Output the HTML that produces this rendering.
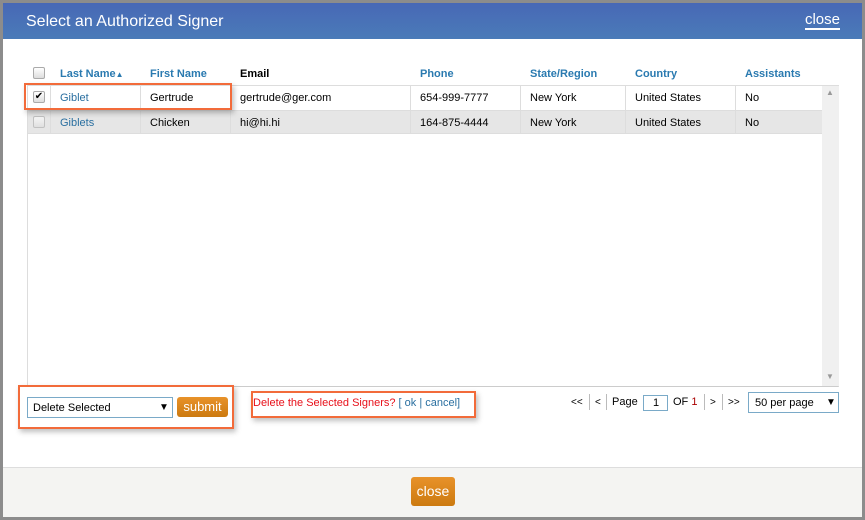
<!DOCTYPE html>
<html><head><style>
*{margin:0;padding:0;box-sizing:border-box}
body{width:865px;height:520px;background:#8c8c8c;font-family:"Liberation Sans",Arial,sans-serif;position:relative;overflow:hidden}
.dlg{position:absolute;left:3px;top:3px;width:859px;height:514px;background:#fff}
.hdr{position:absolute;left:0;top:0;width:859px;height:36px;background:linear-gradient(#4868b6,#4a7bb8);color:#fff}
.hdr .t{position:absolute;left:23px;top:10px;font-size:16px}
.hdr .c{position:absolute;right:22px;top:9px;font-size:15px;border-bottom:2px solid #fff;line-height:16px}
.a{position:absolute;font-size:11px;white-space:nowrap}
.h{font-weight:bold;color:#2a7ab0}
.cb{position:absolute;width:12px;height:12px;border:1px solid #aaa;border-radius:2px;background:linear-gradient(#fff,#ddd)}
.box{position:absolute;border:2px solid #f26b3a;box-shadow:2px 3px 5px rgba(0,0,0,.25)}
.vl{position:absolute;width:1px;background:#ddd}
.btn{position:absolute;background:linear-gradient(#e8922a,#cc7a10);color:#fff;border-radius:3px;text-align:center}
</style></head><body>
<div class="dlg">
<div class="hdr"><span class="t">Select an Authorized Signer</span><span class="c">close</span></div>
</div>
<div class="cb" style="left:33px;top:67px"></div>
<div class="a h" style="left:60px;top:68px">Last Name<span style="font-size:8px">▲</span></div>
<div class="a h" style="left:150px;top:68px">First Name</div>
<div class="a" style="left:240px;top:68px;font-weight:bold">Email</div>
<div class="a h" style="left:420px;top:68px">Phone</div>
<div class="a h" style="left:530px;top:68px">State/Region</div>
<div class="a h" style="left:635px;top:68px">Country</div>
<div class="a h" style="left:745px;top:68px">Assistants</div>
<div style="position:absolute;left:27px;top:85px;width:812px;height:302px;border:1px solid #ddd;border-bottom-color:#ccc"></div>
<div style="position:absolute;left:28px;top:110px;width:794px;height:24px;background:#e6e6e6;border-top:1px solid #ddd;border-bottom:1px solid #ddd"></div>
<div style="position:absolute;left:822px;top:86px;width:17px;height:300px;background:#f0f0f0"></div>
<div class="a" style="left:826px;top:88px;color:#999;font-size:8px">▲</div>
<div class="a" style="left:826px;top:372px;color:#999;font-size:8px">▼</div>
<div class="vl" style="left:50px;top:86px;height:48px"></div>
<div class="vl" style="left:140px;top:86px;height:48px"></div>
<div class="vl" style="left:230px;top:86px;height:48px"></div>
<div class="vl" style="left:410px;top:86px;height:48px"></div>
<div class="vl" style="left:520px;top:86px;height:48px"></div>
<div class="vl" style="left:625px;top:86px;height:48px"></div>
<div class="vl" style="left:735px;top:86px;height:48px"></div>
<div class="cb" style="left:33px;top:91px;font-size:10px;line-height:10px;text-align:center">✔</div>
<div class="a" style="left:60px;top:92px;color:#2a6fa0">Giblet</div>
<div class="a" style="left:150px;top:92px">Gertrude</div>
<div class="a" style="left:240px;top:92px">gertrude@ger.com</div>
<div class="a" style="left:420px;top:92px">654-999-7777</div>
<div class="a" style="left:530px;top:92px">New York</div>
<div class="a" style="left:635px;top:92px">United States</div>
<div class="a" style="left:745px;top:92px">No</div>
<div class="cb" style="left:33px;top:116px;opacity:.6"></div>
<div class="a" style="left:60px;top:117px;color:#2a6fa0">Giblets</div>
<div class="a" style="left:150px;top:117px">Chicken</div>
<div class="a" style="left:240px;top:117px">hi@hi.hi</div>
<div class="a" style="left:420px;top:117px">164-875-4444</div>
<div class="a" style="left:530px;top:117px">New York</div>
<div class="a" style="left:635px;top:117px">United States</div>
<div class="a" style="left:745px;top:117px">No</div>
<div class="box" style="left:24px;top:83px;width:208px;height:27px"></div>
<div style="position:absolute;left:27px;top:397px;width:146px;height:21px;border:1px solid #7aaac8"></div>
<div class="a" style="left:33px;top:402px;font-size:11px">Delete Selected</div>
<div class="a" style="left:159px;top:402px;font-size:10px">▼</div>
<div class="btn" style="left:177px;top:397px;width:51px;height:20px;font-size:13px;line-height:19px">submit</div>
<div class="box" style="left:18px;top:385px;width:216px;height:44px"></div>
<div class="a" style="left:253px;top:397px;color:#e8101a">Delete the Selected Signers? <span style="color:#2a6fa0">[ ok | cancel]</span></div>
<div class="box" style="left:251px;top:391px;width:225px;height:27px"></div>
<div class="a" style="left:571px;top:397px;font-size:10px">&lt;&lt;</div>
<div class="vl" style="left:589px;top:394px;height:16px;background:#bbb"></div>
<div class="a" style="left:595px;top:397px;font-size:10px">&lt;</div>
<div class="vl" style="left:606px;top:394px;height:16px;background:#bbb"></div>
<div class="a" style="left:612px;top:396px">Page</div>
<div style="position:absolute;left:643px;top:395px;width:25px;height:16px;border:1px solid #7aaac8"></div>
<div class="a" style="left:653px;top:397px">1</div>
<div class="a" style="left:673px;top:396px">OF <span style="color:#a00">1</span></div>
<div class="vl" style="left:704px;top:394px;height:16px;background:#bbb"></div>
<div class="a" style="left:710px;top:397px;font-size:10px">&gt;</div>
<div class="vl" style="left:722px;top:394px;height:16px;background:#bbb"></div>
<div class="a" style="left:728px;top:397px;font-size:10px">&gt;&gt;</div>
<div style="position:absolute;left:748px;top:392px;width:91px;height:21px;border:1px solid #7aaac8"></div>
<div class="a" style="left:755px;top:397px;font-size:11px">50 per page</div>
<div class="a" style="left:826px;top:397px;font-size:10px">▼</div>
<div style="position:absolute;left:3px;top:467px;width:859px;height:50px;background:#f4f4f2;border-top:1px solid #ddd"></div>
<div class="btn" style="left:411px;top:477px;width:44px;height:29px;font-size:14px;line-height:28px">close</div>
</body></html>
